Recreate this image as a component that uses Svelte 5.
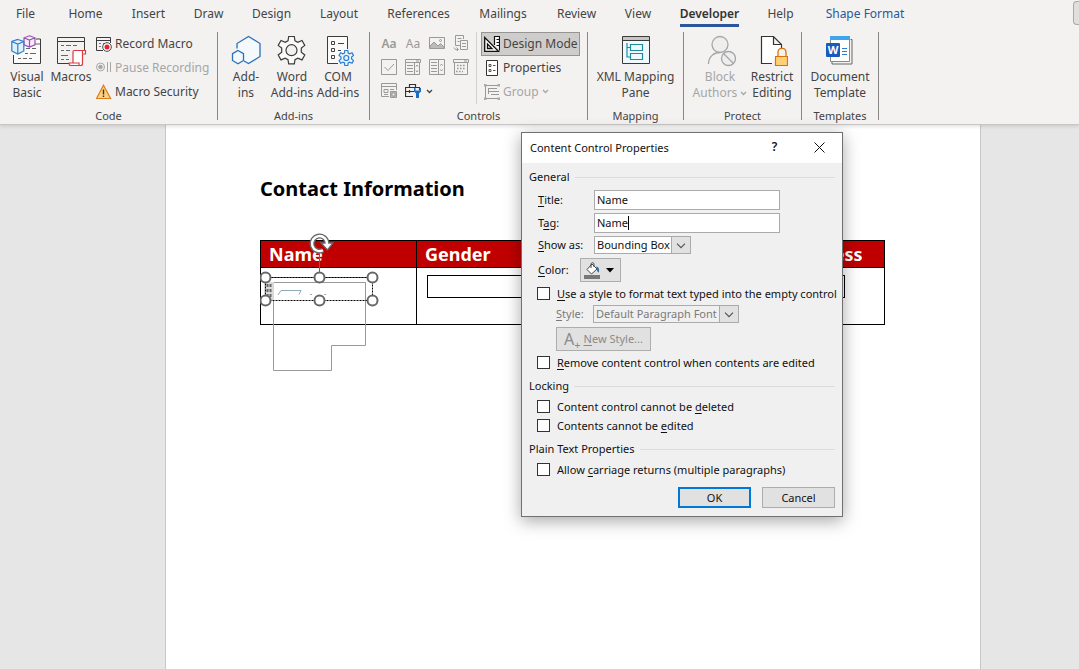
<script>
  const tabs = [
    'File',
    'Home',
    'Insert',
    'Draw',
    'Design',
    'Layout',
    'References',
    'Mailings',
    'Review',
    'View',
    'Developer',
    'Help',
    'Shape Format',
  ];

  let activeTab = $state('Developer');
  let designMode = $state(true);

  let open = $state(true);
  let title = $state('Name');
  let tag = $state('Name');
  let showAs = $state('Bounding Box');
  let useStyle = $state(false);
  let removeOnEdit = $state(false);
  let lockDelete = $state(false);
  let lockEdit = $state(false);
  let carriageReturns = $state(false);

  function close() {
    open = false;
  }
</script>

{#snippet chevron()}
  <svg class="chevron" width="7" height="5" viewBox="0 0 7 5"><path d="M1 1l2.5 2.5L6 1" fill="none" stroke="currentColor" stroke-width="1.3" /></svg>
{/snippet}

{#snippet dropArrow()}
  <span class="drop-arrow">
    <svg width="10" height="6" viewBox="0 0 10 6"><path d="M1 .7l4 4 4-4" fill="none" stroke="#555" stroke-width="1.2" /></svg>
  </span>
{/snippet}

<div class="app">
  <header class="ribbon">
    <nav class="tabs">
      {#each tabs as tab}
        <button
          class="tab"
          class:active={tab === activeTab}
          class:context={tab === 'Shape Format'}
          onclick={() => (activeTab = tab)}><span>{tab}</span></button>
      {/each}
      <button class="edge" aria-label="Share"></button>
    </nav>

    <div class="groups">
      <section class="group code">
        <div class="tools">
          <button class="big">
            <svg width="32" height="32" viewBox="0 0 32 32" fill="none">
              <path d="M25 4h4.500v24.500h-27V20" fill="#fafafa" stroke="#3b3b3b" />
              <path d="M24 9h5M15 13.500h4M21 13.500h4M14 18.500h3M19 18.500h6M7 23.500h3M12 23.500h4M18 23.500h3" stroke="#666" />
              <path d="M18.500.800l5.500 2v7l-5.500 2.200-5.500-2.200v-7zM13 2.800l5.500 2.200 5.500-2.200M18.500 5v7" fill="#f6eef8" stroke="#9b4fb0" stroke-width="1.200" />
              <path d="M6.800 4.500l6 2v9.500l-6 3-6-3V6.500zM.800 6.500l6 2.500 6-2.500M6.800 9v10" fill="#dff1fb" stroke="#2b7cd3" stroke-width="1.200" />
            </svg>
            <span>Visual<br />Basic</span>
          </button>
          <button class="big">
            <svg width="32" height="32" viewBox="0 0 32 32" fill="none">
              <path d="M17 28.500H2.500V2.500h27V15M2.500 6.500h27" stroke="#3b3b3b" />
              <path d="M6 10.500h3M11 10.500h5M18 10.500h4M6 15.500h3M11 15.500h4M6 20.500h7M6 24.500h3M11 24.500h3" stroke="#666" />
              <path d="M19 15.500h11.500v3.500h-3v9.500c0 1-.800 2-1.800 2h-10c-1.200 0-1.700-1-1.700-2.500h4V17c0-1 .400-1.500 1-1.500zM18 28h6v2.500M27.500 19v-3.500" fill="#fff" stroke="#d83b41" stroke-width="1.200" />
            </svg>
            <span>Macros</span>
          </button>
          <div class="stack">
            <button class="small">
              <svg width="16" height="16" viewBox="0 0 16 16" fill="none">
                <path d="M7 14.500H.500V1.500h14V7M.500 4.500h14" stroke="#3b3b3b" />
                <path d="M3 7.500h2M3 10.500h2M7 7.500h2" stroke="#777" />
                <circle cx="11" cy="11" r="4.300" fill="#fff" stroke="#444" />
                <circle cx="11" cy="11" r="2.500" fill="#e8222c" />
              </svg>
              Record Macro
            </button>
            <button class="small" disabled>
              <svg width="16" height="16" viewBox="0 0 16 16" fill="none" stroke="#a6a6a6">
                <circle cx="4.500" cy="7" r="4" />
                <circle cx="4.500" cy="7" r="1.800" fill="#a6a6a6" />
                <path d="M11.500 2v10M14.500 2v10" />
              </svg>
              Pause Recording
            </button>
            <button class="small">
              <svg width="16" height="16" viewBox="0 0 16 16" fill="none">
                <path d="M7.500 1.200L14.600 14.500H.500z" fill="#fcd27e" stroke="#de7b1e" stroke-width="1.200" />
                <path d="M7.500 5.500v5M7.500 11.500v1.500" stroke="#333" stroke-width="1.400" />
              </svg>
              Macro Security
            </button>
          </div>
        </div>
        <h2>Code</h2>
      </section>

      <section class="group addins">
        <div class="tools">
          <button class="big">
            <svg width="32" height="32" viewBox="0 0 32 32" fill="none" stroke="#2b70b8" stroke-width="1.300">
              <path d="M7 13.500V8.500l11.500-7L30 8.500v13L18.500 28.500l-4.500-2.500" fill="#f3f9fd" />
              <path d="M8 15.500l5.500 3.200v6.800L8 28.700l-5.500-3.200v-6.800z" fill="#f3f9fd" />
            </svg>
            <span>Add-<br />ins</span>
          </button>
          <button class="big">
            <svg width="32" height="32" viewBox="0 0 32 32" fill="none" stroke="#3b3b3b" stroke-width="1.200">
              <path d="M12 5.800L12.700 1.500h5.600l.700 4.300 2.800 1.500 4.200-1.800 2.800 4.900-3.500 2.700v4.200l3.500 2.700-2.800 4.900-4.200-1.800-2.800 1.500-.700 4.300h-5.600l-.700-4.300-2.800-1.500L5 24.900 2.200 20l3.500-2.700v-4.200L2.200 10.400 5 5.500l4.200 1.800z" fill="#fafafa" />
              <circle cx="15.500" cy="15.200" r="5.500" fill="#f3f2f1" />
            </svg>
            <span>Word<br />Add-ins</span>
          </button>
          <button class="big">
            <svg width="32" height="32" viewBox="0 0 32 32" fill="none">
              <path d="M16 28.500H5.500v-27h20V14" fill="#fafafa" stroke="#3b3b3b" />
              <path d="M9.500 6.500h3v3h-3zM9.500 13.500h3v3h-3zM9.500 20.500h3v3h-3zM16 8.500h6M16 15.500h3" stroke="#444" />
              <path d="M22.500 18l.300-2.500h3l.400 2.500 1.500.800 2.300-1 1.500 2.600-1.900 1.600v2l1.900 1.600-1.500 2.600-2.300-1-1.500.800-.400 2.500h-3l-.300-2.500-1.600-.800-2.300 1-1.500-2.600 1.900-1.600v-2l-1.900-1.600 1.500-2.600 2.300 1z" fill="#e7f4fc" stroke="#2b7cd3" stroke-width="1.200" />
              <circle cx="24.300" cy="23" r="2.500" stroke="#2b7cd3" stroke-width="1.200" />
            </svg>
            <span>COM<br />Add-ins</span>
          </button>
        </div>
        <h2>Add-ins</h2>
      </section>

      <section class="group controls">
        <div class="tools">
          <div class="icons">
            <button class="glyph rich" disabled>Aa</button>
            <button class="glyph" disabled>Aa</button>
            <button class="glyph" disabled aria-label="Picture">
              <svg width="16" height="16" viewBox="0 0 16 16" fill="none" stroke="#999">
                <path d="M.500 2.500h15v11H.500z" />
                <path d="M1 11l4-4 4 4 2.500-2.500L15 12v1.500H1z" fill="#bbb" />
                <circle cx="11.500" cy="5.500" r="1" />
              </svg>
            </button>
            <button class="glyph" disabled aria-label="Building block">
              <svg width="16" height="16" viewBox="0 0 16 16" fill="none" stroke="#999">
                <path d="M7 10.500H2.500V.500h8V4M4.500 3.500h4M4.500 6.500h2" />
                <path d="M7.500 5.500h7v9h-7zM9 8.500h4M9 11.500h4M1 12.500c0 1.500 1 2 4 2M3.500 12.500l2 2-2 1.500" />
              </svg>
            </button>
            <button class="glyph" disabled aria-label="Check box">
              <svg width="16" height="16" viewBox="0 0 16 16" fill="none" stroke="#999"><path d="M.500.500h15v15H.500zM3.500 8l3.500 3.500L13 5" /></svg>
            </button>
            <button class="glyph" disabled aria-label="Combo box">
              <svg width="16" height="16" viewBox="0 0 16 16" fill="none" stroke="#999"><path d="M.500.500h15v3H.500zM.500 3.500v12h14v-12M9.500 3.500v12M2 6.500h6M2 9.500h6M2 12.500h6M11 7.500l1-1.500 1 1.500M11 11.500l1 1.500 1-1.500M11 2h3" /></svg>
            </button>
            <button class="glyph" disabled aria-label="Drop-down list">
              <svg width="16" height="16" viewBox="0 0 16 16" fill="none" stroke="#999"><path d="M.500.500h15v15H.500zM9.500.500v15M2 3.500h6M2 6.500h6M2 9.500h6M2 12.500h6M11.500 6.500l1-1.500 1 1.500M11.500 10.500l1 1.500 1-1.500" /></svg>
            </button>
            <button class="glyph" disabled aria-label="Date picker">
              <svg width="16" height="16" viewBox="0 0 16 16" fill="none" stroke="#999">
                <path d="M.500.500h15v3H.500zM1.500 3.500v12h13v-12M11 2h3" />
                <path d="M4 6.500h9M4 9.500h9M3 12.500h7" stroke-width="1.600" stroke-dasharray="1.600 1.400" />
              </svg>
            </button>
            <button class="glyph" disabled aria-label="Repeating section">
              <svg width="16" height="16" viewBox="0 0 16 16" fill="none" stroke="#999"><path d="M8 13.500H.500V.500h15V7M.500 3.500h15M3 6.500h4v3H3zM9 6.500h4M3 11.500h4" /><path d="M9.500 8.500h6v6h-6z" fill="#bbb" /><path d="M11 10h3v3h-3z" fill="#eee" /></svg>
            </button>
            <button class="glyph legacy" aria-label="Legacy tools">
              <svg width="17" height="16" viewBox="0 0 17 16" fill="none">
                <path d="M8 13.500H.500V4.500h14V7M4.500 4.500v-3h6v3M.500 8.500H9M4.500 7v3" stroke="#333" stroke-width="1.200" />
                <path d="M9 5v3.500l2 2V15h3v-4.500l2-2V5h-1.500v2.500h-4V5z" fill="#1a6fc4" />
              </svg>
              {@render chevron()}
            </button>
          </div>
          <div class="stack wide">
            <button class="small mode" class:pressed={designMode} onclick={() => (designMode = !designMode)}>
              <svg width="16" height="16" viewBox="0 0 16 16" fill="none" stroke="#111">
                <path d="M.700 1.500v14h14zM3.500 8v4.500H8z" stroke-width="1.300" fill="#fff" />
                <path d="M10.500 9V.500h5v14M12.500 3.500h3M12.500 6.500h3M12.500 9.500h3" fill="#fff" stroke-width="1.200" />
              </svg>
              Design Mode
            </button>
            <button class="small">
              <svg width="16" height="16" viewBox="0 0 16 16" fill="none" stroke="#333">
                <path d="M2.500.500h11v15h-11z" fill="#fff" />
                <path d="M5 4.500h2v2H5zM5 9.500h2v2H5zM9 5.500h2.500M9 10.500h2.500" stroke="#555" />
              </svg>
              Properties
            </button>
            <button class="small" disabled>
              <svg width="16" height="16" viewBox="0 0 16 16" fill="none" stroke="#999">
                <path d="M1.500 2v12M1 1.500h13M14 14.500H2M5 4.500h8M5 7.500h10M7 10.500h8M4.500 4v6" />
                <path d="M0 0h2.500v2.500H0zM13.500 0H16v2.500h-2.500zM0 13.500h2.500V16H0zM13.500 13.500H16V16h-2.500z" fill="#aaa" stroke="none" />
              </svg>
              Group {@render chevron()}
            </button>
          </div>
        </div>
        <h2>Controls</h2>
      </section>

      <section class="group mapping">
        <div class="tools">
          <button class="big">
            <svg width="32" height="32" viewBox="0 0 32 32" fill="none">
              <path d="M2.500 1.500h27v27h-27z" fill="#effaff" stroke="#3b3b3b" />
              <path d="M3 2h26v3.500H3z" fill="#c8c6c4" />
              <path d="M2.500 5.500h27" stroke="#3b3b3b" />
              <path d="M10.500 9.500h12v6h-12zM10.500 18.500h12v6h-12zM7 8v14h3.500M7 12.500h3.500" stroke="#1e8a9e" stroke-width="1.200" />
            </svg>
            <span>XML Mapping<br />Pane</span>
          </button>
        </div>
        <h2>Mapping</h2>
      </section>

      <section class="group protect">
        <div class="tools">
          <button class="big" disabled>
            <svg width="32" height="32" viewBox="0 0 32 32" fill="none" stroke="#a6a6a6" stroke-width="1.300">
              <circle cx="16" cy="9.500" r="8" fill="#eee" />
              <path d="M4.500 29c0-7 5-11.500 11.500-11.500" />
              <circle cx="24.500" cy="23.500" r="7" fill="#eee" />
              <path d="M19.500 18.500l10 10" />
            </svg>
            <span>Block<br />Authors {@render chevron()}</span>
          </button>
          <button class="big">
            <svg width="32" height="32" viewBox="0 0 32 32" fill="none">
              <path d="M16 28.500H5.500v-27h12l8 8V14M17.500 1.500v8h8" fill="#fff" stroke="#333" stroke-width="1.200" />
              <path d="M22 21v-3.500c0-5.500 8-5.500 8 0V21" stroke="#d9730d" stroke-width="1.300" />
              <path d="M19.500 21.500h12v9h-12z" fill="#ffd175" stroke="#d9730d" stroke-width="1.200" />
            </svg>
            <span>Restrict<br />Editing</span>
          </button>
        </div>
        <h2>Protect</h2>
      </section>

      <section class="group templates">
        <div class="tools">
          <button class="big">
            <svg width="32" height="32" viewBox="0 0 32 32" fill="none">
              <path d="M26.500 4.500h1.500V29H8v-2" stroke="#666" />
              <path d="M6.500 2h19v24.500h-19z" fill="#fff" stroke="#888" />
              <path d="M6 1h20v4H6z" fill="#41a5ee" />
              <path d="M18 13.500h5M18 16.500h5M18 19.500h5" stroke="#2b7cd3" />
              <rect x="2" y="8" width="14" height="14" rx="1" fill="#185abd" />
              <text x="9" y="19" text-anchor="middle" font-size="11" font-weight="700" fill="#fff">W</text>
            </svg>
            <span>Document<br />Template</span>
          </button>
        </div>
        <h2>Templates</h2>
      </section>
    </div>
  </header>

  <main class="workspace">
    <article class="page">
      <h1>Contact Information</h1>
      <div class="sheet">
        <table>
          <thead>
            <tr><th>Name</th><th>Gender</th><th></th><th>Email Address</th></tr>
          </thead>
          <tbody>
            <tr>
              <td></td>
              <td><div class="field"></div></td>
              <td></td>
              <td><div class="field"></div></td>
            </tr>
          </tbody>
        </table>

        <!-- selected shape with its handles, floats over the table -->
        <svg class="selection" width="130" height="145" viewBox="0 0 130 145" fill="none">
          <path d="M13.500 52.500h92v63h-34v25h-58z" stroke="#999" />
          <rect x="4" y="52" width="10" height="18" fill="#d9d9d9" />
          <path d="M7.500 54v15M10.500 54v15" stroke="#666" stroke-width="2" stroke-dasharray="3 2" />
          <path d="M18 65l3-4.500h20l-2 4" stroke="#8fa9bd" />
          <path d="M50 64.500h2M64 64.500h2" stroke="#aaa" />
          <path d="M5 47.500h108" stroke="#777" />
          <path d="M5.500 47.500h107v23h-107z" stroke="#000" stroke-dasharray="2 1" />
          <path d="M59.500 20v28" stroke="#666" />
          {#each [[5.5, 47.5], [59.5, 47.5], [112.5, 47.5], [5.5, 70.5], [59.5, 70.5], [112.5, 70.5]] as [cx, cy]}
            <circle {cx} {cy} r="5" fill="#fff" stroke="#666" stroke-width="2" />
          {/each}
          <path d="M63 20.200A7.500 7.500 0 1 1 67 13" stroke="#666" stroke-width="5" />
          <path d="M61 13h12l-5.500 7z" fill="#fff" stroke="#666" stroke-width="1.300" />
          <path d="M63 20.200A7.500 7.500 0 1 1 67 14" stroke="#fff" stroke-width="2.400" />
        </svg>
      </div>
    </article>
  </main>

  {#if open}
    <div class="dialog" role="dialog" aria-labelledby="dialog-title">
      <div class="titlebar">
        <span id="dialog-title">Content Control Properties</span>
        <button class="help" aria-label="Help">?</button>
        <button class="close" aria-label="Close" onclick={close}>
          <svg width="11" height="11" viewBox="0 0 11 11"><path d="M.500.500l10 10M10.500.500l-10 10" stroke="#111" /></svg>
        </button>
      </div>

      <form onsubmit={(e) => e.preventDefault()}>
        <h3>General</h3>
        <div class="row text-row">
          <label for="title"><u>T</u>itle:</label>
          <input id="title" type="text" bind:value={title} />
        </div>
        <div class="row text-row">
          <label for="tag">T<u>a</u>g:</label>
          <div class="caret-box">
            <input id="tag" type="text" bind:value={tag} />
            <span class="caret">{tag}</span>
          </div>
        </div>
        <div class="row show-row">
          <label for="show"><u>S</u>how as:</label>
          <div class="drop show">
            <select id="show" bind:value={showAs}>
              <option>Bounding Box</option>
              <option>Start/End Tag</option>
              <option>None</option>
            </select>
            {@render dropArrow()}
          </div>
        </div>
        <div class="row color-row">
          <label for="color"><u>C</u>olor:</label>
          <button id="color" type="button" class="color">
            <svg width="17" height="17" viewBox="0 0 17 17" fill="none">
              <path d="M8 2l5 5-5.500 5L3 7.500z" fill="#fff" stroke="#444" />
              <path d="M7 6V2.500C7 0 10 0 10 2.500V5" stroke="#444" />
              <path d="M12 4.500c2.500 0 3.500 2 3 6-1.800-.500-2-2-2-3.500z" fill="#2b6ea8" />
              <path d="M0 13h16v4H0z" fill="#777" />
            </svg>
            <svg width="8" height="5" viewBox="0 0 8 5"><path d="M0 0h8L4 4.500z" fill="#000" /></svg>
          </button>
        </div>
        <label class="check"><input type="checkbox" bind:checked={useStyle} /><span><u>U</u>se a style to format text typed into the empty control</span></label>
        <div class="row style-row">
          <label for="style"><u>S</u>tyle:</label>
          <div class="drop default">
            <select id="style" disabled={!useStyle}>
              <option>Default Paragraph Font</option>
            </select>
            {@render dropArrow()}
          </div>
        </div>
        <button type="button" class="push new-style" disabled={!useStyle}>
          <span class="letter">A<sub>+</sub></span><span><u>N</u>ew Style...</span>
        </button>
        <label class="check"><input type="checkbox" bind:checked={removeOnEdit} /><span><u>R</u>emove content control when contents are edited</span></label>

        <h3>Locking</h3>
        <label class="check tight"><input type="checkbox" bind:checked={lockDelete} /><span>Content control cannot be <u>d</u>eleted</span></label>
        <label class="check tight"><input type="checkbox" bind:checked={lockEdit} /><span>Contents cannot be <u>e</u>dited</span></label>

        <h3>Plain Text Properties</h3>
        <label class="check tight"><input type="checkbox" bind:checked={carriageReturns} /><span>Allow <u>c</u>arriage returns (multiple paragraphs)</span></label>

        <div class="actions">
          <button class="push ok" onclick={close}>OK</button>
          <button class="push" type="button" onclick={close}>Cancel</button>
        </div>
      </form>
    </div>
  {/if}
</div>

<style>
  :global(body) {
    background: #e6e6e6;
  }

  .app {
    position: relative;
    display: flex;
    flex-direction: column;
    min-height: 100vh;
    overflow: hidden;
    font-family: 'Noto Sans', 'Open Sans', sans-serif;
    font-size: 12px;
    color: #444;
  }

  button,
  input,
  select {
    font: inherit;
    color: inherit;
    margin: 0;
    padding: 0;
    border: 0;
    background: none;
    box-sizing: border-box;
  }

  h1,
  h2,
  h3 {
    margin: 0;
    font-weight: 400;
  }

  svg {
    display: block;
    flex: none;
  }

  /* ribbon */
  .ribbon {
    background: #f3f2f1;
    border-bottom: 1px solid #c8c6c4;
    box-shadow: 0 1px 4px rgba(0, 0, 0, 0.15);
    z-index: 1;
  }

  .tabs {
    display: grid;
    grid-template-columns: 51px 69px 57px 63px 63px 72px 87px 82px 65px 58px 85px 57px 112px 1fr;
    height: 32px;
  }

  .tab {
    display: flex;
    justify-content: center;
    align-items: start;
    white-space: nowrap;
  }

  .tab span {
    padding: 4px 0 0;
    line-height: 20px;
  }

  .tab.active {
    color: #333;
    font-weight: 600;
  }

  .tab.active span {
    border-bottom: 3px solid #2b579a;
  }

  .tab.context {
    color: #2b579a;
  }

  .edge {
    justify-self: end;
    width: 6px;
    height: 24px;
    margin-top: 1px;
    border: 1px solid #aaa;
    border-right: 0;
    border-radius: 4px 0 0 4px;
    background: #e1dfdd;
  }

  .groups {
    display: flex;
    height: 92px;
  }

  .group {
    display: flex;
    flex-direction: column;
    flex: none;
    box-sizing: border-box;
    height: 88px;
    border-right: 1px solid #8a8886;
  }

  .code {
    width: 218px;
  }

  .addins {
    width: 152px;
  }

  .controls {
    width: 218px;
  }

  .mapping {
    width: 96px;
  }

  .protect {
    width: 118px;
  }

  .templates {
    width: 77px;
  }

  .group h2 {
    font-size: 11px;
    line-height: 16px;
    text-align: center;
  }

  .tools {
    display: flex;
    flex: none;
    height: 76px;
    padding-left: 5px;
  }

  .big {
    display: flex;
    flex-direction: column;
    align-items: center;
    width: 44px;
    padding-top: 3px;
    gap: 2px;
    line-height: 16px;
    white-space: nowrap;
  }

  .addins .big {
    width: 46px;
  }

  .mapping .tools,
  .templates .tools {
    justify-content: center;
    padding: 0;
  }

  .protect .tools {
    padding-left: 10px;
  }

  .protect .big {
    width: 52px;
  }

  button:disabled {
    color: #a6a6a6;
  }

  .chevron {
    display: inline-block;
    vertical-align: middle;
  }

  .stack {
    display: flex;
    flex-direction: column;
    margin-left: 3px;
  }

  .small {
    display: flex;
    align-items: center;
    gap: 3px;
    height: 24px;
    line-height: 16px;
    padding-bottom: 1px;
    white-space: nowrap;
  }

  .wide {
    width: 99px;
    margin-left: 4px;
  }

  .wide .small {
    padding-left: 3px;
  }

  .wide .mode.pressed {
    padding-left: 2px;
    background: #cfcdcb;
    border: 1px solid #979593;
  }

  .icons {
    display: grid;
    grid-template-columns: repeat(4, 24px);
    grid-auto-rows: 24px;
    height: 72px;
    padding: 0 3px 0 2px;
    border-right: 1px solid #d2d0ce;
  }

  .glyph {
    display: flex;
    justify-content: center;
    align-items: center;
    padding-bottom: 2px;
  }

  .glyph:disabled {
    color: #999;
  }

  .rich:disabled {
    font-weight: 600;
  }

  .legacy {
    grid-column: span 2;
    justify-content: start;
    padding-left: 4px;
    gap: 4px;
  }

  /* document */
  .workspace {
    display: grid;
    grid-template-columns: 165px 1fr 98px;
    flex: 1;
  }

  .page {
    grid-column: 2;
    padding: 52px 95px 0 94px;
    background: #fff;
    border: 1px solid #c6c6c6;
    border-width: 0 1px;
    color: #000;
  }

  h1 {
    font-size: 20px;
    font-weight: 700;
    line-height: 24px;
    white-space: nowrap;
  }

  .sheet {
    position: relative;
    margin-top: 39px;
  }

  table {
    width: 100%;
    table-layout: fixed;
    border-collapse: collapse;
  }

  th,
  td {
    border: 1px solid #000;
    text-align: left;
  }

  th {
    height: 26px;
    padding: 0 0 0 8px;
    background: #c00000;
    color: #fff;
    font-size: 18px;
    line-height: 26px;
    white-space: nowrap;
  }

  td {
    height: 56px;
    padding: 0;
    vertical-align: top;
  }

  .field {
    width: 104px;
    height: 21px;
    margin: 7px 0 0 10px;
    border: 1px solid #000;
  }

  .selection {
    position: absolute;
    top: -10px;
    left: 0;
  }

  /* dialog */
  .dialog {
    position: absolute;
    top: 132px;
    left: 521px;
    z-index: 2;
    box-sizing: border-box;
    width: 322px;
    border: 1px solid #707070;
    background: #f0f0f0;
    box-shadow: 0 4px 16px rgba(0, 0, 0, 0.35);
    color: #111;
    font-size: 11px;
    line-height: 16px;
  }

  .titlebar {
    display: flex;
    align-items: center;
    height: 30px;
    padding-left: 8px;
    background: #fff;
  }

  .titlebar span {
    flex: 1;
    padding-bottom: 1px;
  }

  .help,
  .close {
    display: flex;
    justify-content: center;
    align-items: center;
    width: 45px;
    height: 30px;
    padding-bottom: 2px;
  }

  .help {
    font-size: 12px;
    font-weight: 600;
  }

  form {
    display: flex;
    flex-direction: column;
    padding: 6px 7px 8px;
  }

  h3 {
    display: flex;
    align-items: center;
    gap: 5px;
    font-size: 11px;
    line-height: 16px;
  }

  h3::after {
    content: '';
    flex: 1;
    height: 1px;
    background: #dcdcdc;
  }

  u {
    text-underline-offset: 2px;
  }

  .row {
    display: grid;
    grid-template-columns: 56px 1fr;
    align-items: center;
    justify-items: start;
    padding-left: 9px;
  }

  .text-row {
    margin-top: 3px;
  }

  h3 + .text-row {
    margin-top: 5px;
  }

  .text-row input {
    width: 186px;
    height: 20px;
    padding: 0 2px 2px;
    background: #fff;
    border: 1px solid #ababab;
    outline: 0;
  }

  .caret-box {
    position: relative;
    display: flex;
  }

  .caret {
    position: absolute;
    top: 3px;
    left: 3px;
    height: 14px;
    border-right: 1px solid #000;
    color: transparent;
    pointer-events: none;
  }

  .show-row {
    margin-top: 3px;
  }

  .drop {
    display: grid;
    height: 18px;
  }

  .drop select,
  .drop-arrow {
    grid-area: 1 / 1;
  }

  .drop select {
    appearance: none;
    height: 18px;
    padding: 0 2px;
    background: #fff;
    border: 1px solid #ababab;
    line-height: 16px;
  }

  .drop select:disabled {
    background: #f0f0f0;
    color: #7a7a7a;
    opacity: 1;
  }

  .show select {
    width: 97px;
  }

  .default select {
    width: 146px;
  }

  .drop-arrow {
    display: flex;
    justify-content: center;
    align-items: center;
    justify-self: end;
    box-sizing: border-box;
    width: 20px;
    height: 18px;
    padding-top: 2px;
    border: 1px solid #ababab;
    background: #e1e1e1;
    pointer-events: none;
  }

  .color-row {
    grid-template-columns: 42px 1fr;
    margin-top: 4px;
  }

  .color {
    display: flex;
    align-items: center;
    gap: 5px;
    width: 41px;
    height: 24px;
    padding-left: 3px;
    background: #e1e1e1;
    border: 1px solid #adadad;
  }

  .check {
    display: flex;
    align-items: center;
    gap: 7px;
    height: 23px;
    padding-left: 8px;
    white-space: nowrap;
  }

  .check input {
    appearance: none;
    flex: none;
    width: 13px;
    height: 13px;
    background: #fff;
    border: 1px solid #333;
  }

  .check input:checked {
    background: #333;
    box-shadow: inset 0 0 0 2px #fff;
  }

  .tight {
    height: 19px;
  }

  h3 + .tight {
    margin-top: 3px;
  }

  .style-row {
    grid-template-columns: 37px 1fr;
    padding-left: 27px;
    color: #7a7a7a;
  }

  .push {
    width: 73px;
    height: 21px;
    background: #e1e1e1;
    border: 1px solid #adadad;
  }

  .new-style {
    display: flex;
    justify-content: center;
    align-items: center;
    gap: 3px;
    width: 95px;
    height: 24px;
    margin: 4px 0 0 27px;
  }

  .new-style:disabled {
    color: #8a8a8a;
  }

  .letter {
    font-size: 16px;
  }

  .letter sub {
    font-size: 11px;
    line-height: 0;
  }

  .check + h3 {
    margin-top: 4px;
  }

  .tight + h3 {
    margin-top: 6px;
  }

  .actions {
    display: flex;
    justify-content: flex-end;
    gap: 11px;
    margin-top: 8px;
  }

  .ok {
    border: 2px solid #0078d7;
  }
</style>
